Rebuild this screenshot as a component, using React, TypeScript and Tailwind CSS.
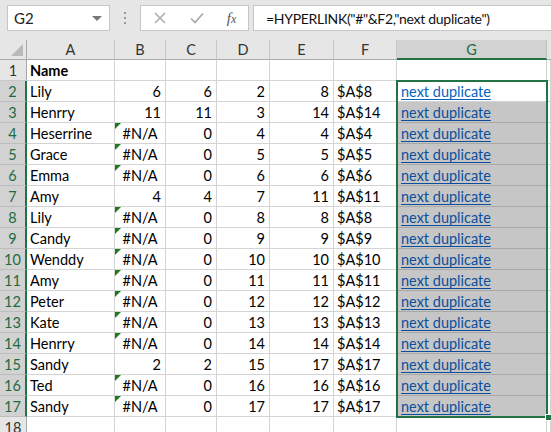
import React from "react";

type Row = [string, string, string, string, string, string];

const rows: Row[] = [
  ["Lily", "6", "6", "2", "8", "$A$8"],
  ["Henrry", "11", "11", "3", "14", "$A$14"],
  ["Heserrine", "#N/A", "0", "4", "4", "$A$4"],
  ["Grace", "#N/A", "0", "5", "5", "$A$5"],
  ["Emma", "#N/A", "0", "6", "6", "$A$6"],
  ["Amy", "4", "4", "7", "11", "$A$11"],
  ["Lily", "#N/A", "0", "8", "8", "$A$8"],
  ["Candy", "#N/A", "0", "9", "9", "$A$9"],
  ["Wenddy", "#N/A", "0", "10", "10", "$A$10"],
  ["Amy", "#N/A", "0", "11", "11", "$A$11"],
  ["Peter", "#N/A", "0", "12", "12", "$A$12"],
  ["Kate", "#N/A", "0", "13", "13", "$A$13"],
  ["Henrry", "#N/A", "0", "14", "14", "$A$14"],
  ["Sandy", "2", "2", "15", "17", "$A$17"],
  ["Ted", "#N/A", "0", "16", "16", "$A$16"],
  ["Sandy", "#N/A", "0", "17", "17", "$A$17"],
];

const cols = ["A", "B", "C", "D", "E", "F", "G"];

const cell = "h-[21px] border-r border-b border-[#d4d4d4] leading-[21px] whitespace-nowrap overflow-hidden";

function ErrFlag() {
  return (
    <span className="absolute left-0 top-0 w-0 h-0 border-t-[6px] border-t-[#1f7a1f] border-r-[6px] border-r-transparent" />
  );
}

export default function App() {
  return (
    <div className="w-[551px] h-[432px] overflow-hidden bg-white text-[14.5px] text-black font-['Lato','Liberation_Sans',sans-serif]">
      {/* Formula bar */}
      <div className="h-[40px] bg-[#e6e6e6] flex items-start pt-[5px]">
        <div className="ml-[7px] w-[103px] h-[26px] bg-white border border-[#c6c6c6] flex items-center justify-between pl-[6px] pr-[7px]">
          <span className="text-[#222] text-[15px]">G2</span>
          <span className="w-0 h-0 border-l-[5px] border-r-[5px] border-t-[5px] border-l-transparent border-r-transparent border-t-[#777]" />
        </div>
        <div className="w-[30px] h-[26px] flex flex-col items-center justify-center gap-[3px]">
          <span className="w-[2px] h-[2px] bg-[#9a9a9a]" />
          <span className="w-[2px] h-[2px] bg-[#9a9a9a]" />
          <span className="w-[2px] h-[2px] bg-[#9a9a9a]" />
        </div>
        <div className="w-[109px] h-[26px] bg-white border border-[#c6c6c6] flex items-center">
          <span className="w-[37px] flex justify-center">
            <svg width="12" height="12" viewBox="0 0 12 12">
              <path d="M1 1 L11 11 M11 1 L1 11" stroke="#a6a6a6" strokeWidth="1.4" />
            </svg>
          </span>
          <span className="w-[37px] flex justify-center">
            <svg width="14" height="12" viewBox="0 0 14 12">
              <path d="M1 6.5 L5 10.5 L13 1.5" stroke="#a6a6a6" strokeWidth="1.6" fill="none" />
            </svg>
          </span>
          <span className="w-[33px] flex justify-center text-[15px] italic text-[#555] font-['Liberation_Serif',serif]">
            f<span className="text-[12px] self-end mb-[1px]">x</span>
          </span>
        </div>
        <div className="ml-[4px] flex-1 h-[26px] bg-white border-y border-l border-[#c6c6c6] flex items-center pl-[12px] text-[14px] tracking-[-0.3px] text-[#111] whitespace-nowrap overflow-hidden">
          =HYPERLINK("#"&amp;F2,"next duplicate")
        </div>
      </div>

      {/* Sheet */}
      <div className="relative">
        <div className="grid grid-cols-[27px_88px_51px_51px_53px_64px_63px_150px_1fr]">
          {/* header row */}
          <div className="h-[20px] bg-[#e6e6e6] border-r border-b border-[#a9a9a9] relative overflow-hidden">
            <svg className="absolute right-[3px] bottom-[3px]" width="12" height="12" viewBox="0 0 12 12">
              <path d="M12 0 L12 12 L0 12 Z" fill="#b9b9b9" />
            </svg>
          </div>
          {cols.map((c) =>
            c === "G" ? (
              <div
                key={c}
                className="h-[20px] bg-[#d2d2d2] border-r border-[#bdbdbd] border-b-2 border-b-[#217346] text-center leading-[19px] text-[#1d6b41]"
              >
                {c}
              </div>
            ) : (
              <div
                key={c}
                className="h-[20px] bg-[#e6e6e6] border-r border-[#c8c8c8] border-b border-b-[#a9a9a9] text-center leading-[19px] text-[#333]"
              >
                {c}
              </div>
            )
          )}
          <div className="h-[20px] bg-[#e6e6e6] border-b border-[#a9a9a9]" />

          {/* row 1 */}
          <div className="h-[21px] bg-[#e6e6e6] border-r border-b border-r-[#a9a9a9] border-b-[#c8c8c8] text-center leading-[21px] text-[#333]">
            1
          </div>
          <div className={`${cell} pl-[3px] font-bold`}>Name</div>
          <div className={cell} />
          <div className={cell} />
          <div className={cell} />
          <div className={cell} />
          <div className={cell} />
          <div className={cell} />
          <div className={cell} />

          {rows.map((r, i) => {
            const n = i + 2;
            const err = r[1] === "#N/A";
            return (
              <React.Fragment key={n}>
                <div className="h-[21px] bg-[#d2d2d2] border-r-2 border-b border-r-[#217346] border-b-[#bdbdbd] text-center leading-[21px] text-[#1d6b41]">
                  {n}
                </div>
                <div className={`${cell} pl-[3px]`}>{r[0]}</div>
                <div className={`${cell} relative ${err ? "text-center" : "text-right pr-[4px]"}`}>
                  {err && <ErrFlag />}
                  {r[1]}
                </div>
                <div className={`${cell} text-right pr-[4px]`}>{r[2]}</div>
                <div className={`${cell} text-right pr-[4px]`}>{r[3]}</div>
                <div className={`${cell} text-right pr-[4px]`}>{r[4]}</div>
                <div className={`${cell} pl-[3px]`}>{r[5]}</div>
                {n === 2 ? (
                  <div className={`${cell} pl-[4px]`}>
                    <span className="text-[#0563c1] underline underline-offset-[2px]">next duplicate</span>
                  </div>
                ) : (
                  <div className="h-[21px] bg-[#c6c6c6] border-r border-b border-[#a8a8a8] leading-[21px] pl-[4px] whitespace-nowrap overflow-hidden">
                    <span className="text-[#0b4f9c] underline underline-offset-[2px]">next duplicate</span>
                  </div>
                )}
                <div className={cell} />
              </React.Fragment>
            );
          })}

          {/* row 18 */}
          <div className="h-[21px] bg-[#e6e6e6] border-r border-b border-r-[#a9a9a9] border-b-[#c8c8c8] text-center leading-[21px] text-[#333]">
            18
          </div>
          <div className={cell} />
          <div className={cell} />
          <div className={cell} />
          <div className={cell} />
          <div className={cell} />
          <div className={cell} />
          <div className={cell} />
          <div className={cell} />
        </div>

        {/* selection outline G2:G17 */}
        <div className="absolute left-[396px] top-[40px] w-[152px] h-[338px] border-2 border-[#217346] pointer-events-none" />
        {/* fill handle */}
        <div className="absolute left-[545px] top-[374px] w-[7px] h-[7px] bg-[#217346] border border-white pointer-events-none" />
      </div>
    </div>
  );
}
